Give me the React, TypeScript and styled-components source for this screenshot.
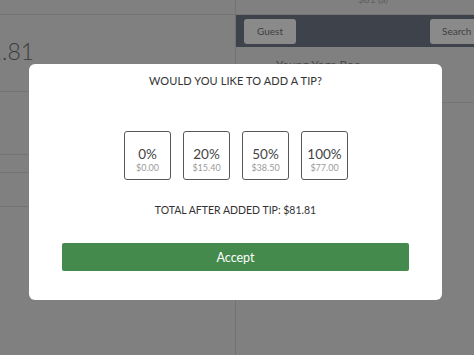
import styled, { createGlobalStyle } from "styled-components";

const GlobalStyle = createGlobalStyle`
  html, body {
    margin: 0;
    padding: 0;
    background: #808080;
  }
  body {
    font-family: Lato, "Noto Sans", sans-serif;
  }
`;

const tips = [
  { percent: "0%", amount: "$0.00" },
  { percent: "20%", amount: "$15.40" },
  { percent: "50%", amount: "$38.50" },
  { percent: "100%", amount: "$77.00" },
];

const App = () => {
  return (
    <>
      <GlobalStyle />
      <StyledScreen>
        <LeftPane>
          <TopStrip />
          <TotalRow>$81.81</TotalRow>
          <PaneRow $height={62} />
          <PaneRow $height={17} />
          <PaneRow $height={33} />
        </LeftPane>
        <RightPane>
          <TopStrip>
            <FaintText>$81 (a)</FaintText>
          </TopStrip>
          <Toolbar>
            <ToolButton>Guest</ToolButton>
            <ToolButton $clip>Search ▾</ToolButton>
          </Toolbar>
          <ListRow>
            <Bullet />
            <span>Young Yoga Boo</span>
          </ListRow>
        </RightPane>

        <Backdrop>
          <Modal>
            <Title>WOULD YOU LIKE TO ADD A TIP?</Title>
            <TipRow>
              {tips.map((tip) => (
                <TipBox key={tip.percent}>
                  <Percent>{tip.percent}</Percent>
                  <Amount>{tip.amount}</Amount>
                </TipBox>
              ))}
            </TipRow>
            <Total>TOTAL AFTER ADDED TIP: $81.81</Total>
            <AcceptButton>Accept</AcceptButton>
          </Modal>
        </Backdrop>
      </StyledScreen>
    </>
  );
};

export default App;

const StyledScreen = styled.div`
  position: relative;
  display: grid;
  grid-template-columns: 236px 1fr;
  width: 474px;
  height: 355px;
  overflow: hidden;
  background: #808080;
`;

const LeftPane = styled.div`
  display: flex;
  flex-direction: column;
  border-right: 1px solid #727272;
`;

const RightPane = styled.div`
  display: flex;
  flex-direction: column;
  overflow: hidden;
`;

const TopStrip = styled.div`
  height: 14px;
  border-bottom: 1px solid #747474;
  display: flex;
  justify-content: center;
  overflow: hidden;
`;

const FaintText = styled.div`
  margin-top: -7px;
  font-size: 10px;
  color: #5e5e5e;
  padding-left: 36px;
`;

const TotalRow = styled.div`
  height: 77px;
  border-bottom: 1px solid #747474;
  display: flex;
  align-items: center;
  margin-left: -38px;
  font-size: 23px;
  font-weight: 300;
  color: #3c3c3c;
  padding-bottom: 4px;
  box-sizing: border-box;
`;

const PaneRow = styled.div<{ $height: number }>`
  height: ${(p) => p.$height}px;
  border-bottom: 1px solid #747474;
`;

const Toolbar = styled.div`
  height: 32px;
  background: #3e424b;
  display: flex;
  align-items: center;
  justify-content: space-between;
  padding-left: 8px;
  box-sizing: border-box;
`;

const ToolButton = styled.div<{ $clip?: boolean }>`
  height: 25px;
  padding: ${(p) => (p.$clip ? "0 0 0 12px" : "0 13px")};
  width: ${(p) => (p.$clip ? "56px" : "auto")};
  margin-right: ${(p) => (p.$clip ? "-12px" : "0")};
  background: #8a8a8a;
  border-radius: 3px;
  font-size: 10px;
  color: #3f3f3f;
  display: flex;
  align-items: center;
  white-space: nowrap;
  overflow: hidden;
  flex-shrink: 0;
  box-sizing: border-box;
`;

const ListRow = styled.div`
  height: 56px;
  border-bottom: 1px solid #747474;
  display: flex;
  align-items: flex-start;
  gap: 14px;
  padding: 10px 0 0 22px;
  box-sizing: border-box;
  font-size: 12px;
  color: #4a4a4a;
`;

const Bullet = styled.span`
  width: 4px;
  height: 4px;
  margin-top: 7px;
  border-radius: 50%;
  background: #4a4a4a;
`;

const Backdrop = styled.div`
  position: absolute;
  inset: 0;
  display: flex;
  align-items: flex-start;
  justify-content: flex-start;
  padding: 64px 0 0 29px;
`;

const Modal = styled.div`
  width: 413px;
  height: 236px;
  background: #ffffff;
  border-radius: 6px;
  display: flex;
  flex-direction: column;
  align-items: center;
  padding-top: 10px;
  box-sizing: border-box;
`;

const Title = styled.div`
  font-size: 11px;
  line-height: 14px;
  color: #333333;
  letter-spacing: 0.1px;
`;

const TipRow = styled.div`
  display: flex;
  gap: 12px;
  margin-top: 43px;
  margin-left: 1px;
`;

const TipBox = styled.div`
  width: 47px;
  height: 49px;
  border: 1.5px solid #585858;
  border-radius: 3px;
  box-sizing: border-box;
  display: flex;
  flex-direction: column;
  align-items: center;
  padding-top: 14px;
`;

const Percent = styled.div`
  font-size: 13.5px;
  line-height: 16px;
  color: #444444;
`;

const Amount = styled.div`
  font-size: 9px;
  line-height: 11px;
  color: #9b9b9b;
`;

const Total = styled.div`
  margin-top: 23px;
  font-size: 10.5px;
  line-height: 14px;
  color: #333333;
`;

const AcceptButton = styled.div`
  margin-top: 26px;
  width: 347px;
  height: 28px;
  background: #438a4c;
  border-radius: 2px;
  color: #ffffff;
  font-size: 12.5px;
  display: flex;
  align-items: center;
  justify-content: center;
`;
